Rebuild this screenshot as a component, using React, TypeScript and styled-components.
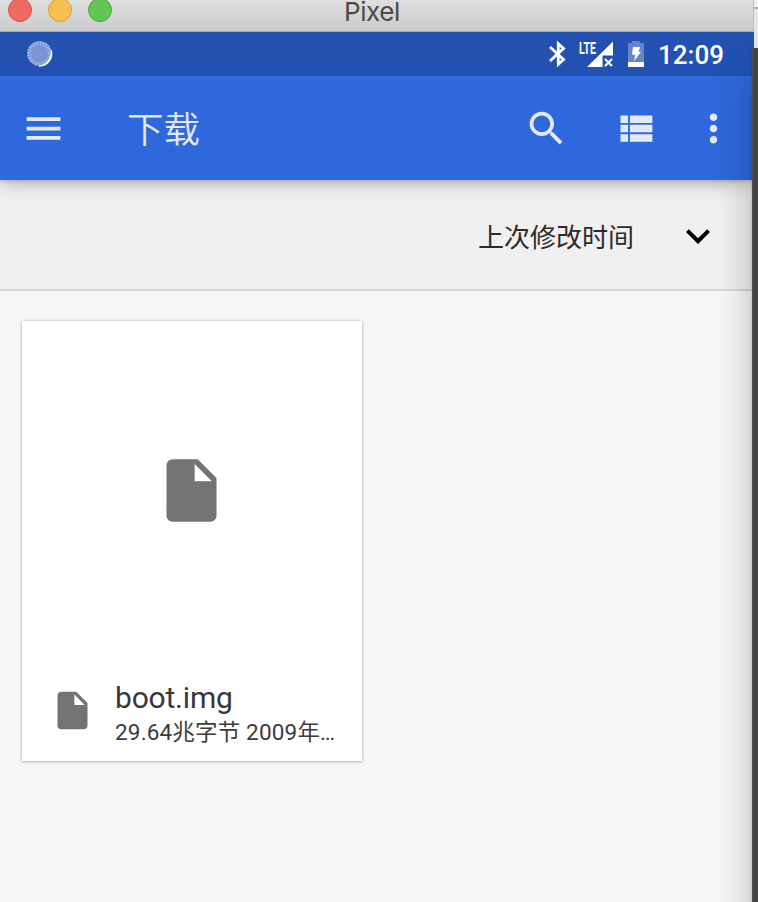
import React from "react";
import styled, { createGlobalStyle } from "styled-components";

const GlobalStyle = createGlobalStyle`
  * { box-sizing: border-box; }
  body {
    margin: 0;
    background: #e4e4e4;
    font-family: Roboto, "Noto Sans CJK SC", sans-serif;
  }
`;

const Screen = styled.div`
  position: relative;
  width: 758px;
  height: 902px;
  overflow: hidden;
  background: linear-gradient(#f0f0f0 0 7px, #a9a9a9 7px 9px, #e6e6e6 9px);
`;

const EmulatorWindow = styled.div`
  display: flex;
  flex-direction: column;
  width: 754px;
  height: 902px;
  background: #f7f7f7;
`;

const TitleBar = styled.header`
  position: relative;
  display: flex;
  justify-content: center;
  flex: none;
  height: 32px;
  padding-right: 9px;
  background: linear-gradient(#dedede, #cbcbcb);
  border-bottom: 1px solid #ababab;
  border-right: 1px solid #bcbcbc;
`;

const TrafficLights = styled.div`
  position: absolute;
  left: 8px;
  top: -2px;
  display: flex;
  gap: 16px;
`;

const Light = styled.span<{ $fill: string; $edge: string }>`
  width: 24px;
  height: 24px;
  border-radius: 50%;
  background: ${(p) => p.$fill};
  border: 1px solid ${(p) => p.$edge};
`;

const WindowTitle = styled.h1`
  margin: 0;
  font: 400 26px/23px Inter, sans-serif;
  letter-spacing: -0.4px;
  color: #4a4a4a;
`;

const StatusBar = styled.div`
  display: flex;
  align-items: center;
  flex: none;
  height: 44px;
  padding: 0 30px 0 26px;
  background: #2251b2;
`;

const StatusIcons = styled.div`
  display: flex;
  align-items: center;
  margin-left: auto;
`;

const Signal = styled.div`
  position: relative;
  width: 34px;
  height: 28px;
  margin: 0 15px 0 13px;
`;

const SignalIcon = styled.svg`
  display: block;
  margin-left: 8px;
`;

const NetworkType = styled.span`
  position: absolute;
  left: 0;
  top: 2px;
  font-size: 17px;
  line-height: 13px;
  font-weight: 700;
  color: #fff;
  transform: scaleX(0.62);
  transform-origin: left;
`;

const Clock = styled.time`
  margin: 3px 0 0 14px;
  font-size: 26px;
  font-weight: 500;
  line-height: 41px;
  color: #fff;
`;

const AppBar = styled.div`
  position: relative;
  z-index: 1;
  display: flex;
  align-items: center;
  flex: none;
  height: 104px;
  padding: 0 18px 0 21px;
  color: #e1e9fb;
  background: #2f68dc;
  box-shadow: 0 1px 18px rgba(0, 0, 0, 0.34), 0 1px 3px rgba(0, 0, 0, 0.15);
  clip-path: inset(0 0 -30px 0);
`;

const AppTitle = styled.h2`
  flex: 1;
  margin: 6px 0 0 61px;
  font-size: 36.5px;
  line-height: 50px;
  font-weight: 350;
`;

const Actions = styled.div`
  display: flex;
  align-items: center;
`;

const IconButton = styled.button<{ $gap?: number }>`
  display: flex;
  padding: 0;
  border: 0;
  margin-left: ${(p) => p.$gap ?? 0}px;
  color: inherit;
  background: none;
`;

const SortBar = styled.div`
  display: flex;
  align-items: center;
  justify-content: flex-end;
  flex: none;
  height: 111px;
  padding: 3px 32px 0 0;
  background: #f0f0f0;
  border-bottom: 2px solid #d5d5d5;
  color: #000;
`;

const SortLabel = styled.span`
  margin: 4px 40px 0 0;
  font-size: 26px;
  line-height: 36px;
  color: #2b2b2b;
`;

const FileGrid = styled.main`
  display: grid;
  grid-template-columns: 340px;
  padding: 30px 22px;
`;

const Card = styled.article`
  display: flex;
  flex-direction: column;
  height: 440px;
  background: #fff;
  box-shadow: 0 0 3px rgba(0, 0, 0, 0.22), 0 1px 3px rgba(0, 0, 0, 0.16);
`;

const Preview = styled.div`
  display: flex;
  align-items: center;
  justify-content: center;
  height: 338px;
  padding-right: 1px;
`;

const Details = styled.div`
  display: flex;
  align-items: flex-start;
  padding: 20px 0 0 28px;
`;

const FileIconSlot = styled.div`
  display: flex;
  padding-top: 9px;
`;

const FileText = styled.div`
  margin-left: 20px;
  white-space: nowrap;
`;

const FileName = styled.div`
  font-size: 30px;
  line-height: 37px;
  letter-spacing: -0.2px;
  color: #383838;
`;

const FileMeta = styled.div`
  font-size: 22.5px;
  line-height: 33px;
  letter-spacing: 0.17px;
  color: #3c3c3c;
`;

const Backdrop = styled.aside`
  position: absolute;
  z-index: 2;
  left: 752px;
  top: 48px;
  width: 40px;
  height: 900px;
  background: #434343;
  border-left: 1px solid #505050;
  box-shadow: 0 24px 38px rgba(0, 0, 0, 0.26), 0 2px 3px rgba(0, 0, 0, 0.15);
`;

type GlyphProps = { d: string; size?: number; color?: string };

const Glyph = ({ d, size = 45, color = "currentColor" }: GlyphProps) => (
  <svg width={size} height={size} viewBox="0 0 24 24" fill={color}>
    <path d={d} />
  </svg>
);

const glyphs = {
  menu: "M3 18h18v-2H3v2zm0-5h18v-2H3v2zm0-7v2h18V6H3z",
  search:
    "M15.5 14h-.79l-.28-.27C15.41 12.59 16 11.11 16 9.5 16 5.91 13.09 3 9.5 3S3 5.91 3 9.5 5.91 16 9.5 16c1.61 0 3.09-.59 4.23-1.57l.27.28v.79l5 4.99L20.49 19l-4.99-5zm-6 0C7.01 14 5 11.99 5 9.5S7.01 5 9.5 5 14 7.01 14 9.5 11.99 14 9.5 14z",
  list: "M4 14h4v-4H4v4zm0 5h4v-4H4v4zM4 9h4V5H4v4zm5 5h12v-4H9v4zm0 5h12v-4H9v4zM9 5v4h12V5H9z",
  more: "M12 8c1.1 0 2-.9 2-2s-.9-2-2-2-2 .9-2 2 .9 2 2 2zm0 2c-1.1 0-2 .9-2 2s.9 2 2 2 2-.9 2-2-.9-2-2-2zm0 6c-1.1 0-2 .9-2 2s.9 2 2 2 2-.9 2-2-.9-2-2-2z",
  expand: "M16.59 8.59L12 13.17 7.41 8.59 6 10l6 6 6-6z",
  file: "M6 2c-1.1 0-1.99.9-1.99 2L4 20c0 1.1.89 2 1.99 2H18c1.1 0 2-.9 2-2V8l-6-6H6zm7 7V3.5L18.5 9H13z",
};

const SyncSpinner = () => (
  <svg width="28" height="28" viewBox="0 0 28 28">
    <circle cx="13.5" cy="13.5" r="12.5" fill="#7995d5" />
    <circle cx="13.5" cy="13.5" r="10.3" fill="none" stroke="#a9bce6" strokeWidth="3.6" strokeDasharray="1.2 1.5" />
    <path d="M25.4 10C27.6 18 22.5 26.5 13 26.2C20 25 25.5 19.5 25.4 10z" fill="#fff" stroke="#fff" strokeWidth="0.8" />
  </svg>
);

const Bluetooth = () => (
  <svg width="17" height="28" viewBox="0 0 17 28" fill="none" stroke="#fff" strokeWidth="2.8">
    <path d="M1 7L14.6 19.6L9.3 24.3V3.7L14.6 8.4L1 21" />
  </svg>
);

const Battery = () => (
  <svg width="16" height="28" viewBox="0 0 16 28">
    <path d="M4 1h8v2h4v19H0V3h4z" fill="#6785cd" />
    <path d="M0 22h16v5H0z" fill="#fff" />
    <path d="M5 7h7l-1.4 5H13L6 21l1.3-6.3H4z" fill="#fff" />
  </svg>
);

export default function App() {
  return (
    <>
      <GlobalStyle />
      <Screen>
        <EmulatorWindow>
          <TitleBar>
            <TrafficLights>
              <Light $fill="#ed6b60" $edge="#dc5147" />
              <Light $fill="#f6c050" $edge="#dba03c" />
              <Light $fill="#62c655" $edge="#4cab3f" />
            </TrafficLights>
            <WindowTitle>Pixel</WindowTitle>
          </TitleBar>
          <StatusBar>
            <SyncSpinner />
            <StatusIcons>
              <Bluetooth />
              <Signal>
                <SignalIcon width="27" height="28" viewBox="0 0 27 28">
                  <path d="M26 1.5V15.5H15.5V27H0z" fill="#fff" />
                  <path d="M18 19l7 7M25 19l-7 7" stroke="#fff" strokeWidth="2.2" />
                </SignalIcon>
                <NetworkType>LTE</NetworkType>
              </Signal>
              <Battery />
              <Clock>12:09</Clock>
            </StatusIcons>
          </StatusBar>
          <AppBar>
            <IconButton aria-label="Menu">
              <Glyph d={glyphs.menu} />
            </IconButton>
            <AppTitle>下载</AppTitle>
            <Actions>
              <IconButton aria-label="Search">
                <Glyph d={glyphs.search} />
              </IconButton>
              <IconButton $gap={44} aria-label="List view">
                <Glyph d={glyphs.list} />
              </IconButton>
              <IconButton $gap={33} aria-label="More">
                <Glyph d={glyphs.more} />
              </IconButton>
            </Actions>
          </AppBar>
          <SortBar>
            <SortLabel>上次修改时间</SortLabel>
            <IconButton aria-label="Sort order">
              <Glyph d={glyphs.expand} size={48} />
            </IconButton>
          </SortBar>
          <FileGrid>
            <Card>
              <Preview>
                <Glyph d={glyphs.file} size={75} color="#737373" />
              </Preview>
              <Details>
                <FileIconSlot>
                  <Glyph d={glyphs.file} color="#737373" />
                </FileIconSlot>
                <FileText>
                  <FileName>boot.img</FileName>
                  <FileMeta>29.64兆字节 2009年…</FileMeta>
                </FileText>
              </Details>
            </Card>
          </FileGrid>
        </EmulatorWindow>
        <Backdrop />
      </Screen>
    </>
  );
}
